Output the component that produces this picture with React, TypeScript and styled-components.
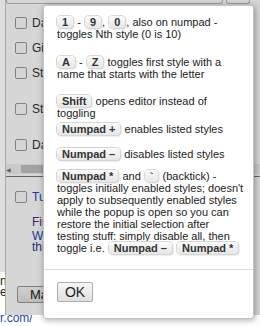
import React from "react"
import styled, { createGlobalStyle } from "styled-components"

const GlobalStyle = createGlobalStyle`
  html, body {
    margin: 0;
    padding: 0;
    background: #fff;
  }
  body {
    width: 260px;
    height: 326px;
    overflow: hidden;
    font-family: "Liberation Sans", Arial, sans-serif;
  }
`

const Stage = styled.div`
  position: relative;
  width: 260px;
  height: 326px;
  overflow: hidden;
  background: #fff;
`

// web page behind the extension popup
const PageText = styled.div`
  padding-top: 276px;
  font-size: 12px;
  line-height: 11px;
`

const PageLine = styled.div<{ $link?: boolean; $gap?: number }>`
  white-space: nowrap;
  margin-top: ${(p) => p.$gap ?? 0}px;
  color: ${(p) => (p.$link ? "#1f45b5" : "#222")};
`

const PageShade = styled.div`
  position: absolute;
  left: 0;
  top: 0;
  width: 6px;
  height: 272px;
  background: #dedede;
`

// the dimmed extension popup
const StylusPopup = styled.div`
  position: absolute;
  left: 5px;
  top: 0;
  width: 255px;
  height: 315px;
  background: #fff;
  border-left: 1px solid #aaa;
  box-sizing: border-box;
  overflow: hidden;
  font-size: 12px;
  color: #222;
`

const Dim = styled.div`
  position: absolute;
  inset: 0;
  background: rgba(0, 0, 0, 0.16);
`

const TopBar = styled.div`
  display: flex;
  gap: 3px;
  height: 12px;
`

const SearchEdge = styled.div<{ $w: number }>`
  width: ${(p) => p.$w}px;
  height: 3px;
  border: 1px solid #bbb;
  border-top: 0;
  border-radius: 0 0 3px 3px;
`

const Row = styled.div<{ $h: number }>`
  display: flex;
  align-items: center;
  height: ${(p) => p.$h}px;
  padding-left: 9px;
  white-space: nowrap;
`

const Check = styled.span`
  flex: none;
  width: 10px;
  height: 10px;
  border: 1px solid #9a9a9a;
  border-radius: 2px;
  background: #fdfdfd;
`

const Label = styled.span<{ $link?: boolean }>`
  margin-left: 5px;
  color: ${(p) => (p.$link ? "#1f45b5" : "#333")};
`

const ScrollBar = styled.div`
  display: flex;
  align-items: center;
  height: 10px;
  margin-top: 8px;
  background: #f0f0f0;
  font-size: 6px;
  color: #777;
`

const ScrollThumb = styled.div`
  margin-left: 10px;
  width: 160px;
  height: 8px;
  background: #c1c1c1;
`

const Divider = styled.div`
  margin-top: 2px;
  border-top: 1px solid #777;
`

const Links = styled.div`
  padding-left: 26px;
  line-height: 11px;
  white-space: nowrap;
`

const LinkLine = styled.div<{ $gap?: number; $color: string }>`
  margin-top: ${(p) => p.$gap ?? 0}px;
  color: ${(p) => p.$color};
`

const BackButton = styled.div`
  margin: 33px 0 0 11px;
  width: 70px;
  height: 15px;
  border: 1px solid #999;
  border-radius: 2px;
  background: linear-gradient(#f8f8f8, #e2e2e2);
  padding-left: 12px;
  font-size: 13px;
  line-height: 15px;
  color: #222;
`

// help message box
const HelpBox = styled.div`
  position: absolute;
  left: 43px;
  top: 5px;
  width: 211px;
  height: 314px;
  box-sizing: border-box;
  display: flex;
  flex-direction: column;
  background: #fff;
  border: 1px solid #c4c4c4;
  border-radius: 3px;
  box-shadow: 1px 1px 6px rgba(0, 0, 0, 0.35);
`

const HelpBody = styled.div`
  flex: 1;
  padding: 10px 0 0 13px;
  width: 187px;
  font-size: 11px;
  line-height: 12px;
  color: #222;
`

const Para = styled.p<{ $gap: number }>`
  margin: ${(p) => p.$gap}px 0 0;
`

const Key = styled.mark`
  margin: 0 1px;
  padding: 0 5px;
  font-weight: bold;
  color: #333;
  background: linear-gradient(#fbfbfb, #e6e6e6);
  border-radius: 4px;
  box-shadow: 0 0 0 1px #d6d6d6, 1px 1px 2px rgba(0, 0, 0, 0.25);
  white-space: nowrap;
  &:first-child {
    margin-left: 0;
  }
`

const Footer = styled.div`
  height: 49px;
  box-sizing: border-box;
  padding: 12px 13px 0;
  border-top: 1px solid #dcdcdc;
`

const OkButton = styled.button`
  width: 36px;
  height: 20px;
  padding: 0;
  font-family: "Liberation Sans", Arial, sans-serif;
  font-size: 14px;
  color: #222;
  background: linear-gradient(#f7f7f7, #dfdfdf);
  border: 1px solid #adadad;
  border-radius: 2px;
`

export default function App() {
  return (
    <Stage>
      <GlobalStyle />
      <PageShade />
      <PageText>
        <PageLine>n</PageLine>
        <PageLine>e</PageLine>
        <PageLine $link $gap={15}>
          r.com/
        </PageLine>
      </PageText>

      <StylusPopup>
        <TopBar>
          <SearchEdge $w={215} />
          <SearchEdge $w={22} />
        </TopBar>
        <Row $h={22}>
          <Check />
          <Label>Dark Reader fixes</Label>
        </Row>
        <Row $h={27}>
          <Check />
          <Label>GitHub Dark</Label>
        </Row>
        <Row $h={23}>
          <Check />
          <Label>Stack Overflow Dark</Label>
        </Row>
        <Row $h={50}>
          <Check />
          <Label>Stylish tweaks</Label>
        </Row>
        <Row $h={22}>
          <Check />
          <Label>Dark YouTube</Label>
        </Row>
        <ScrollBar>
          ◀<ScrollThumb />
        </ScrollBar>
        <Divider />
        <Row $h={40}>
          <Check />
          <Label $link>Turn all styles off</Label>
        </Row>
        <Links>
          <LinkLine $color="#4b2f86">Find styles</LinkLine>
          <LinkLine $gap={3} $color="#1f45b5">
            Write style for:
          </LinkLine>
          <LinkLine $color="#1f3a8a">this URL</LinkLine>
        </Links>
        <BackButton>Manage</BackButton>
        <Dim />
      </StylusPopup>

      <HelpBox>
        <HelpBody>
          <Para $gap={0}>
            <Key>1</Key> - <Key>9</Key>, <Key>0</Key>, also on numpad - toggles Nth style (0 is 10)
          </Para>
          <Para $gap={16}>
            <Key>A</Key> - <Key>Z</Key> toggles first style with a name that starts with the letter
          </Para>
          <Para $gap={15}>
            <Key>Shift</Key> opens editor instead of toggling
          </Para>
          <Para $gap={4}>
            <Key>Numpad +</Key> enables listed styles
          </Para>
          <Para $gap={13}>
            <Key>Numpad –</Key> disables listed styles
          </Para>
          <Para $gap={10}>
            <Key>Numpad *</Key> and <Key>`</Key> (backtick) - toggles initially enabled styles; doesn't apply
            to subsequently enabled styles while the popup is open so you can restore the initial selection
            after testing stuff: simply disable all, then toggle i.e. <Key>Numpad –</Key> <Key>Numpad *</Key>
          </Para>
        </HelpBody>
        <Footer>
          <OkButton>OK</OkButton>
        </Footer>
      </HelpBox>
    </Stage>
  )
}
